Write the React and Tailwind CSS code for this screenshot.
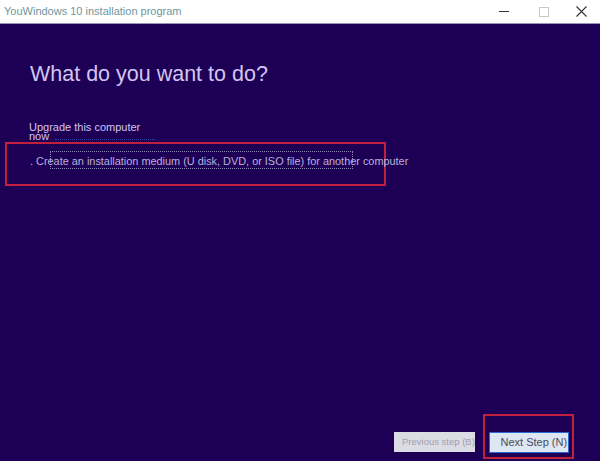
import React from "react";

export default function App() {
  return (
    <div className="w-[600px] h-[461px] flex flex-col overflow-hidden bg-[#1d0055]" style={{ fontFamily: '"Liberation Sans", Arial, sans-serif' }}>
      <div className="h-[24px] shrink-0 bg-white border-b border-[#9a94b8] flex items-center">
        <div className="pl-[4px] text-[11px] text-[#6f96a0] leading-none flex-1">YouWindows 10 installation program</div>
        <div className="flex items-center h-full">
          <div className="w-[40px] h-full flex items-center justify-center">
            <div className="w-[10px] h-px bg-[#333]" />
          </div>
          <div className="w-[39px] h-full flex items-center justify-center">
            <div className="w-[10px] h-[10px] border border-[#c8c8c8]" />
          </div>
          <div className="w-[37px] h-full flex items-center justify-center">
            <svg width="11" height="11" viewBox="0 0 11 11">
              <path d="M0.5 0.5 L10.5 10.5 M10.5 0.5 L0.5 10.5" stroke="#333" strokeWidth="1.1" fill="none" />
            </svg>
          </div>
        </div>
      </div>
      <div className="flex-1 flex flex-col relative">
        <div className="pl-[30px] pt-[38px] text-[21.5px] leading-[24px] text-[#d2c6f0] whitespace-nowrap">What do you want to do?</div>
        <div className="pl-[29px] mt-[37px] text-[11px] leading-[9px] text-[#cfc6ee]">
          <div>Upgrade this computer</div>
          <div className="flex items-end">
            <span>now</span>
            <span className="ml-[6px] mb-[1px] w-[100px] border-b border-dotted border-[#3a4aa0]" />
          </div>
        </div>
        <div className="ml-[5px] mt-[1px] w-[381px] h-[44px] border-2 border-[#c0203c] relative flex items-center">
          <div className="absolute left-[43px] top-[7px] w-[303px] h-[18px] border border-dotted border-[#8e88b8]" />
          <div className="pl-[23px] text-[10.9px] leading-none text-[#bab2dc] -mt-[6px] relative whitespace-nowrap">. Create an installation medium (U disk, DVD, or ISO file) for another computer</div>
        </div>
        <div className="flex-1" />
        <div className="flex justify-end items-end pr-[26px] pb-[2px]">
          <div className="mb-[7px] w-[81px] h-[20px] bg-[#dcdce4] flex items-center pl-[8px] overflow-hidden whitespace-nowrap text-[9.5px] text-[#a0a0b0]">Previous step (B)</div>
          <div className="ml-[8px] w-[91px] h-[45px] border-2 border-[#c0203c] flex items-end justify-center pb-[4px]">
            <div className="w-[80px] h-[21px] bg-[#dde6f2] border border-[#2a6ad0] flex items-center pl-[11px] overflow-hidden whitespace-nowrap text-[11px] text-[#4a4a5a]">Next Step (N)</div>
          </div>
        </div>
      </div>
    </div>
  );
}
